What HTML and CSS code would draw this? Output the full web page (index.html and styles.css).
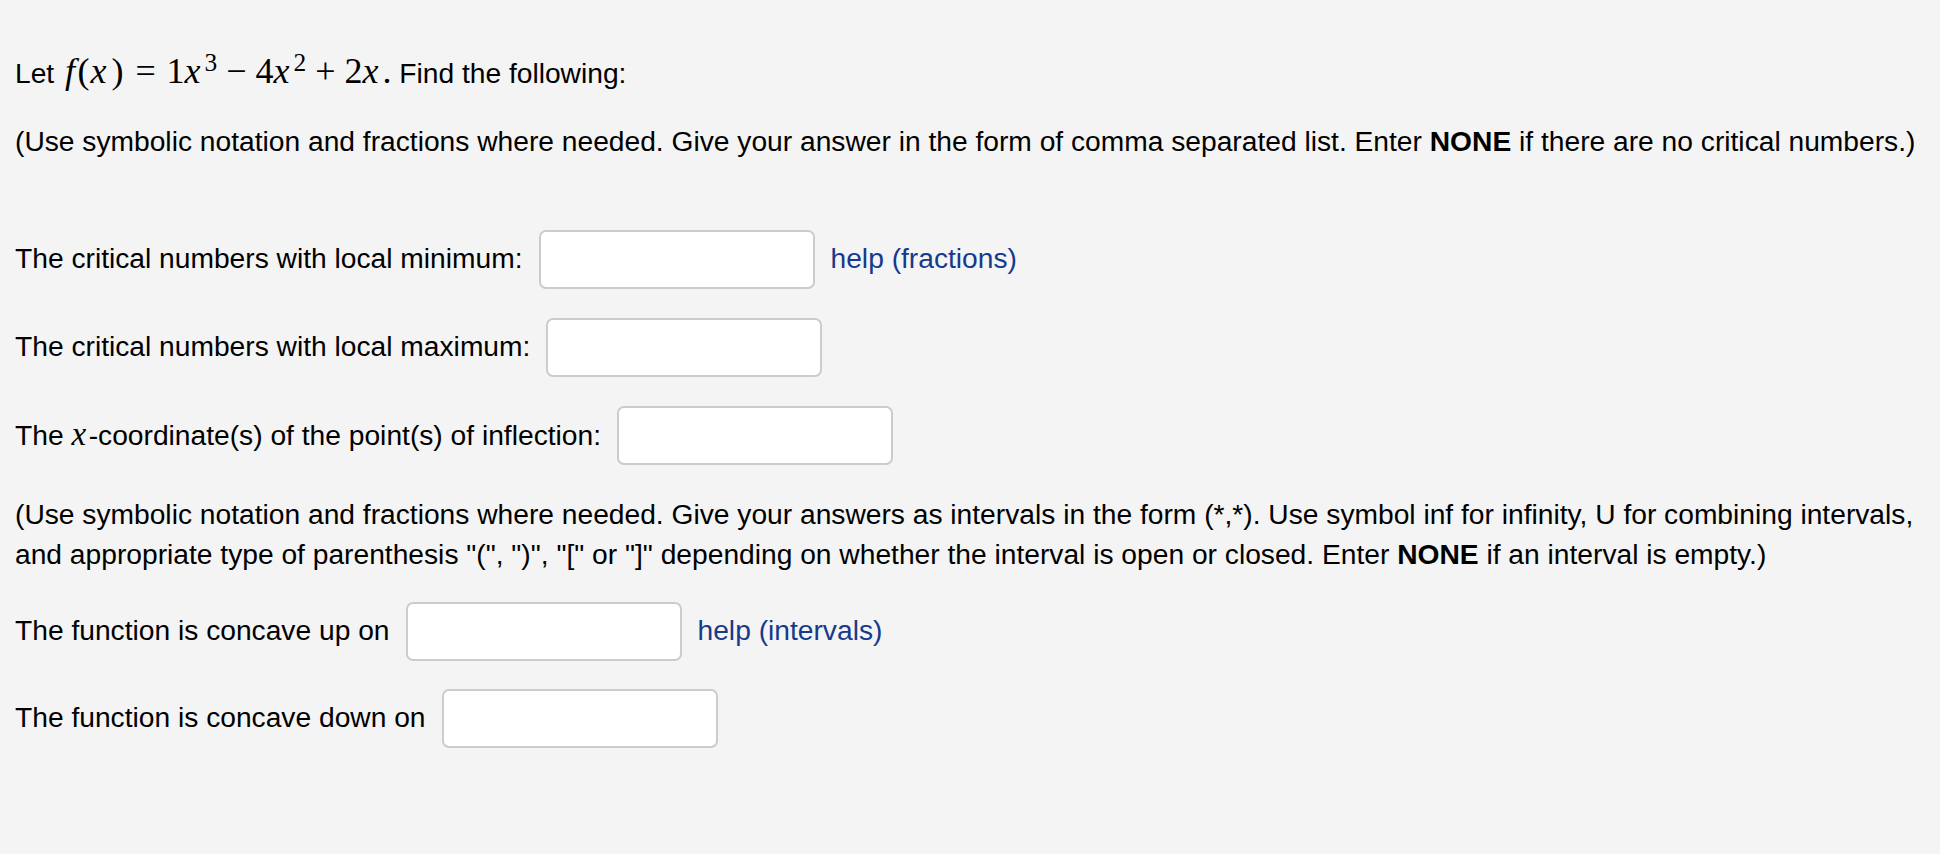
FILE: index.html
```html
<!DOCTYPE html>
<html lang="en">
<head>
<meta charset="utf-8">
<title>Critical numbers and concavity</title>
<link rel="stylesheet" href="styles.css">
</head>
<body>
<div class="problem">
  <p class="intro">Let <span class="math"><span class="mi mi-f">f</span><span class="paren">(</span><span class="mi mi-x">x</span><span class="paren">)</span><span class="rel">=</span><span class="mn">1</span><span class="mi mi-x">x</span><sup class="sup">3</sup><span class="bin">−</span><span class="mn">4</span><span class="mi mi-x">x</span><sup class="sup">2</sup><span class="bin">+</span><span class="mn">2</span><span class="mi mi-x">x</span><span class="period">.</span></span> Find the following:</p>
  <p class="note">(Use symbolic notation and fractions where needed. Give your answer in the form of comma separated list. Enter <b>NONE</b> if there are no critical numbers.)</p>

  <div class="row row-first">
    <span class="label">The critical numbers with local minimum:</span>
    <input class="answer" type="text" aria-label="local minimum">
    <a class="help" href="#">help (fractions)</a>
  </div>
  <div class="row">
    <span class="label">The critical numbers with local maximum:</span>
    <input class="answer" type="text" aria-label="local maximum">
  </div>
  <div class="row">
    <span class="label">The <span class="var">x</span>-coordinate(s) of the point(s) of inflection:</span>
    <input class="answer" type="text" aria-label="inflection">
  </div>

  <p class="note note-intervals"><span class="line">(Use symbolic notation and fractions where needed. Give your answers as intervals in the form (*,*). Use symbol inf for infinity, U for combining intervals,</span><span class="line">and appropriate type of parenthesis "(", ")", "[" or "]" depending on whether the interval is open or closed. Enter <b>NONE</b> if an interval is empty.)</span></p>

  <div class="row row-after-note">
    <span class="label">The function is concave up on</span>
    <input class="answer" type="text" aria-label="concave up">
    <a class="help" href="#">help (intervals)</a>
  </div>
  <div class="row row-last">
    <span class="label">The function is concave down on</span>
    <input class="answer" type="text" aria-label="concave down">
  </div>
</div>
</body>
</html>
```

FILE: styles.css
```css
html, body {
  margin: 0;
  padding: 0;
  background: #f4f4f4;
}

body {
  font-family: "Liberation Sans", Arial, Helvetica, sans-serif;
  font-size: 28.2px;
  color: #000;
}

.problem {
  padding: 51px 5px 0 15px;
}

.problem p {
  margin: 0;
  line-height: 40px;
}

.note {
  margin-top: 28px !important;
}

.note-intervals {
  margin-top: 29px !important;
}

.line {
  display: block;
  white-space: nowrap;
}

.note b {
  font-weight: bold;
}

/* math set in a serif, spaced to TeX metrics */
.math {
  font-family: "Liberation Serif", "Times New Roman", serif;
  font-size: 36px;
  white-space: nowrap;
}

.mi {
  font-style: italic;
}

.mi-f {
  padding-left: 0.08em;
  padding-right: 0.04em;
}

.mi-x {
  padding-right: 0.11em;
}

.paren {
  padding: 0 0.03em;
}

.rel {
  margin: 0 0.3em;
}

.bin {
  margin: 0 0.25em;
}

.sup {
  font-size: 0.707em;
  line-height: 0;
  vertical-align: 0.48em;
}

.var {
  font-family: "Liberation Serif", "Times New Roman", serif;
  font-style: italic;
  font-size: 33px;
  padding-right: 0.08em;
}

.row {
  display: flex;
  align-items: center;
  gap: 16px;
  height: 59px;
  margin-top: 29px;
}

.row-first {
  margin-top: 69px;
}

.row-after-note {
  margin-top: 28px;
}

.row-last {
  margin-top: 28px;
}

.label {
  white-space: nowrap;
  padding-bottom: 3px;
}

.answer {
  box-sizing: border-box;
  width: 276px;
  height: 59px;
  margin: 0;
  padding: 4px 10px;
  background: #fff;
  border: 2px solid #cccccc;
  border-radius: 7px;
  font: inherit;
  outline: none;
}

.help {
  color: #173a8c;
  text-decoration: none;
  white-space: nowrap;
  padding-bottom: 3px;
}
```
